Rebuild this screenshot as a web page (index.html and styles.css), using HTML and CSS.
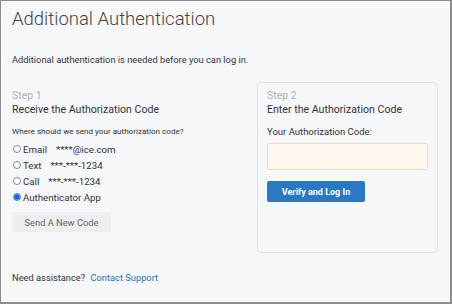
FILE: index.html
```html
<!DOCTYPE html>
<html lang="en">
<head>
  <meta charset="UTF-8" />
  <title>Additional Authentication</title>
  <link rel="stylesheet" href="styles.css">
</head>
<body>
  <div class="frame">
    <h1 class="title">Additional Authentication</h1>
    <p class="intro">Additional authentication is needed before you can log in.</p>

    <div class="steps">
      <div class="step step-one">
        <div class="step-num">Step 1</div>
        <div class="step-title">Receive the Authorization Code</div>
        <div class="question">Where should we send your authorization code?</div>
        <label class="option"><input type="radio" name="method">Email<span class="dest">****@ice.com</span></label>
        <label class="option"><input type="radio" name="method">Text<span class="dest">***-***-1234</span></label>
        <label class="option"><input type="radio" name="method">Call<span class="dest">***-***-1234</span></label>
        <label class="option"><input type="radio" name="method" checked>Authenticator App</label>
        <button class="btn-send">Send A New Code</button>
      </div>

      <div class="step step-two">
        <div class="step-num">Step 2</div>
        <div class="step-title">Enter the Authorization Code</div>
        <div class="field-label">Your Authorization Code:</div>
        <input class="code-input" type="text">
        <button class="btn-verify">Verify and Log In</button>
      </div>
    </div>

    <div class="help">Need assistance? <a href="#">Contact Support</a></div>
  </div>
</body>
</html>
```

FILE: styles.css
```css
body {
  margin: 0;
  font-family: Roboto, 'Liberation Sans', sans-serif;
  color: #333;
  background: #fff;
}
.frame {
  box-sizing: border-box;
  width: 452px;
  height: 304px;
  background: #f6f7f9;
  border-left: 1px solid #8c8c8c;
  border-top: 1px solid #8c8c8c;
  border-right: 2px solid #8c8c8c;
  border-bottom: 2px solid #8c8c8c;
  box-shadow: inset -1px -1px 0 #fff;
  padding: 4px 12px 0 11px;
}
.title {
  margin: 0;
  font-size: 18.5px;
  font-weight: 300;
  color: #444;
  line-height: 28px;
}
.intro {
  margin: 21px 0 0;
  font-size: 9.3px;
  line-height: 12px;
}
.steps {
  display: flex;
  gap: 10px;
  margin-top: 16px;
}
.step-one {
  flex: 1;
  padding-top: 7px;
}
.step-two {
  box-sizing: border-box;
  width: 181px;
  height: 171px;
  border: 1px solid #e1e3e6;
  border-radius: 4px;
  padding: 6px 9px 10px 9px;
}
.step-num {
  font-size: 10.5px;
  color: #b0b2b5;
  line-height: 14px;
}
.step-title {
  font-size: 10.6px;
  color: #333;
  line-height: 14px;
}
.question {
  font-size: 8.1px;
  margin: 9px 0 4px;
  line-height: 11px;
}
.option {
  display: flex;
  align-items: center;
  font-size: 9.7px;
  height: 16px;
  white-space: pre;
}
.option input {
  appearance: none;
  box-sizing: border-box;
  margin: 0 2px 0 1px;
  width: 8px;
  height: 8px;
  border: 1px solid #8a8a8a;
  border-radius: 50%;
  background: #fff;
}
.option input:checked {
  border-color: #3d86e6;
  background: radial-gradient(circle, #1e63d0 0 2px, #4a90ea 2.5px);
}
.dest {
  margin-left: 9px;
}
.btn-send {
  margin: 7px 0 0 0;
  width: 99px;
  height: 20px;
  border: none;
  border-radius: 2px;
  background: #eceef0;
  color: #666;
  font-family: inherit;
  font-size: 9.3px;
}
.field-label {
  font-size: 9.5px;
  margin: 9px 0 5px;
  line-height: 12px;
}
.code-input {
  display: block;
  box-sizing: border-box;
  width: 161px;
  height: 27px;
  background: #fff8f1;
  border: 1px solid #f3d7bc;
  border-radius: 2px;
}
.btn-verify {
  margin-top: 11px;
  width: 98px;
  height: 21px;
  border: none;
  border-radius: 2px;
  background: #2a78c2;
  color: #fff;
  font-family: inherit;
  font-weight: 700;
  font-size: 9px;
}
.help {
  margin-top: 19px;
  font-size: 9.3px;
  line-height: 11px;
}
.help a {
  color: #2b72b5;
  text-decoration: none;
  margin-left: 3px;
}
```
